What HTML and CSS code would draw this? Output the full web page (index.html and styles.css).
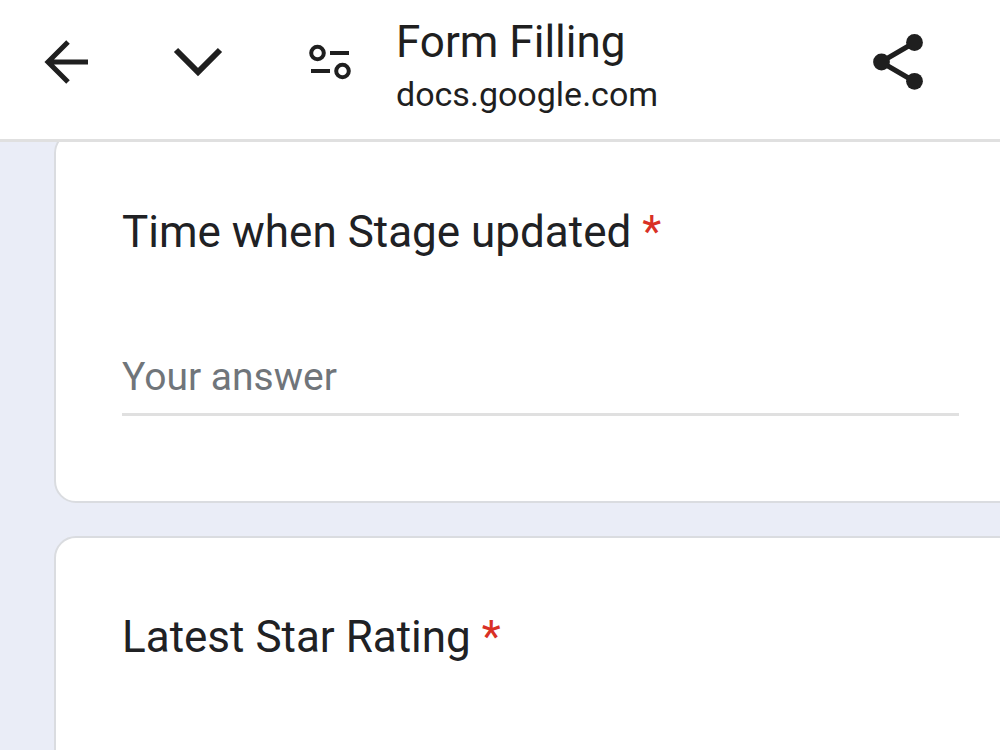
FILE: index.html
```html
<!DOCTYPE html>
<html lang="en">
    <head>
        <meta charset="UTF-8">
        <meta name="viewport" content="width=device-width, initial-scale=1.0">
        <title>Form Filling</title>
        <link rel="stylesheet" href="styles.css">
    </head>
    <body>
        <header class="toolbar">
            <button class="icon-button" type="button" aria-label="Back">
                <svg viewBox="0 0 56 56"><path d="M50 28H10M30 8L10 28L30 48" stroke-width="5"/></svg>
            </button>
            <button class="icon-button" type="button" aria-label="Minimize">
                <svg viewBox="0 0 56 56"><path d="M6 16L28 38L50 16" stroke-width="6"/></svg>
            </button>
            <button class="icon-button" type="button" aria-label="Site settings">
                <svg viewBox="0 0 56 56">
                    <circle cx="15.5" cy="19" r="6.3" stroke-width="4"/>
                    <path d="M28 19H47M9 37H28" stroke-width="4"/>
                    <circle cx="40.5" cy="37" r="6.3" stroke-width="4"/>
                </svg>
            </button>
            <div class="page-info">
                <h1 class="page-title">Form Filling</h1>
                <div class="page-host">docs.google.com</div>
            </div>
            <button class="icon-button share" type="button" aria-label="Share">
                <svg viewBox="0 0 56 56">
                    <path d="M44.5 8.5L11 28L44.5 47.5" stroke-width="5"/>
                    <g class="dots">
                        <circle cx="44.5" cy="8.5" r="8.4"/>
                        <circle cx="11.5" cy="28" r="8.4"/>
                        <circle cx="44.5" cy="47.3" r="8.4"/>
                    </g>
                </svg>
            </button>
        </header>
        <main class="form">
            <section class="card">
                <label class="question" for="stage-time">Time when Stage updated <span class="required">*</span></label>
                <input class="answer" id="stage-time" type="text" placeholder="Your answer" required>
            </section>
            <section class="card">
                <h2 class="question">Latest Star Rating <span class="required">*</span></h2>
            </section>
        </main>
    </body>
</html>
```
FILE: styles.css
```css
* {
    box-sizing: border-box;
}
body {
    display: flex;
    flex-direction: column;
    height: 100vh;
    margin: 0;
    overflow: hidden;
    background-color: #eaedf7;
    color: #202124;
    font-family: Roboto, sans-serif;
}
.toolbar {
    display: flex;
    align-items: center;
    gap: 76px;
    padding: 10px 74px 25px 38px;
    border-bottom: 3px solid #e0e0e0;
    background-color: #fff;
    color: #1f1f1f;
}
.icon-button {
    flex: none;
    width: 56px;
    height: 56px;
    padding: 0;
    border: 0;
    background: none;
    color: inherit;
}
.icon-button svg {
    display: block;
    fill: none;
    stroke: currentColor;
}
.icon-button .dots {
    fill: currentColor;
    stroke: none;
}
.share {
    margin-left: auto;
}
.page-info {
    margin-left: -38px;
}
.page-title {
    margin: 0;
    font-size: 44px;
    font-weight: 400;
    line-height: 64px;
}
.page-host {
    font-size: 34px;
    line-height: 40px;
}
.form {
    display: flex;
    flex: 1;
    flex-direction: column;
    gap: 33px;
    min-height: 0;
    padding-left: 54px;
    overflow: hidden;
}
/* cards run past the right edge of the viewport */
.card {
    flex: none;
    margin-right: -27px;
    padding: 69px 66px 85px;
    border: 2px solid #dadce0;
    border-radius: 22px;
    background-color: #fff;
}
/* scrolled partly under the toolbar */
.card:first-child {
    margin-top: -11px;
}
.card:last-child {
    flex: 1 0 240px;
}
.question {
    display: block;
    margin: 0;
    font-size: 44px;
    font-weight: 400;
    line-height: 60px;
}
.required {
    color: #d93025;
}
.answer {
    display: block;
    width: 100%;
    height: 75px;
    margin-top: 79px;
    padding: 0;
    border: 0;
    border-bottom: 3px solid #e0e0e0;
    outline: 0;
    background: none;
    color: inherit;
    font: 39px Roboto, sans-serif;
}
.answer::placeholder {
    color: #70757a;
    opacity: 1;
}
```
